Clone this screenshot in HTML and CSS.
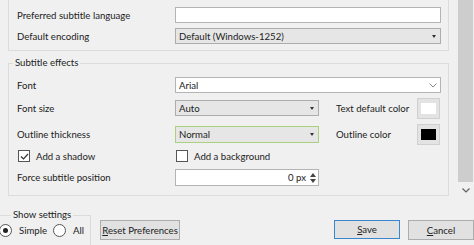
FILE: index.html
```html
<!DOCTYPE html>
<html lang="en">

<head>
    <meta charset="UTF-8">
    <meta name="viewport" content="width=device-width, initial-scale=1.0">
    <title>Subtitle Preferences</title>
    <link rel="stylesheet" href="styles.css">
</head>

<body>

    <div class="main">
        <div class="panes">

            <div class="group top-group">
                <div class="row r-lang">
                    <label class="lbl">Preferred subtitle language</label>
                    <div class="field wide"></div>
                </div>
                <div class="row r-enc">
                    <label class="lbl">Default encoding</label>
                    <div class="combo wide">
                        <span>Default (Windows-1252)</span>
                        <span class="tri"></span>
                    </div>
                </div>
            </div>

            <fieldset class="group effects">
                <legend>Subtitle effects</legend>

                <div class="row r-font">
                    <label class="lbl">Font</label>
                    <div class="field wide">
                        <span>Arial</span>
                        <svg class="chev" width="8" height="5" viewBox="0 0 8 5">
                            <polyline points="0.5,0.5 4,4 7.5,0.5" fill="none" stroke="#8a8a8a" stroke-width="1" />
                        </svg>
                    </div>
                </div>

                <div class="row r-size">
                    <label class="lbl">Font size</label>
                    <div class="combo narrow">
                        <span>Auto</span>
                        <span class="tri"></span>
                    </div>
                    <label class="lbl2">Text default color</label>
                    <div class="swatch-btn"><span class="swatch white"></span></div>
                </div>

                <div class="row r-outline">
                    <label class="lbl">Outline thickness</label>
                    <div class="combo narrow focused">
                        <span>Normal</span>
                        <span class="tri"></span>
                    </div>
                    <label class="lbl2">Outline color</label>
                    <div class="swatch-btn"><span class="swatch black"></span></div>
                </div>

                <div class="row r-checks">
                    <div class="check-item lbl">
                        <span class="box">
                            <svg width="11" height="11" viewBox="0 0 11 11">
                                <polyline points="2,5.5 4.5,8 9,3" fill="none" stroke="#333" stroke-width="1.2" />
                            </svg>
                        </span>
                        <span>Add a shadow</span>
                    </div>
                    <div class="check-item">
                        <span class="box"></span>
                        <span>Add a background</span>
                    </div>
                </div>

                <div class="row r-pos">
                    <label class="lbl">Force subtitle position</label>
                    <div class="field narrow spin">
                        <span>0 px</span>
                        <span class="spin-arrows">
                            <span class="up"></span>
                            <span class="down"></span>
                        </span>
                    </div>
                </div>
            </fieldset>

        </div>

        <div class="scrollbar">
            <div class="thumb"></div>
            <div class="scroll-down">
                <svg width="8" height="5" viewBox="0 0 8 5">
                    <polyline points="0.5,0.5 4,4 7.5,0.5" fill="none" stroke="#606060" stroke-width="1.2" />
                </svg>
            </div>
        </div>
    </div>

    <div class="footer">
        <fieldset class="show-settings">
            <legend>Show settings</legend>
            <div class="radios">
                <span class="radio selected"></span>
                <span class="radio-text">Simple</span>
                <span class="radio"></span>
                <span class="radio-text">All</span>
            </div>
        </fieldset>

        <button class="btn reset"><u>R</u>eset Preferences</button>
        <button class="btn save default"><u>S</u>ave</button>
        <button class="btn cancel"><u>C</u>ancel</button>
    </div>

</body>

</html>
```

FILE: styles.css
```css
html {
    font-family: Lato, sans-serif;
    font-size: 9.6px;
    color: #222222;
}

body {
    margin: 0;
    width: 474px;
    height: 245px;
    overflow: hidden;
    background-color: #f0f0f0;
}

label, span, legend, button {
    white-space: nowrap;
}

.main {
    display: flex;
    height: 196px;
}

.panes {
    padding-left: 8px;
    width: 441px;
}

.group {
    border: 1px solid #dcdcdc;
    margin: 0;
    padding: 0 7px 0 8px;
    min-width: 0;
}

.top-group {
    border-top: none;
    padding-top: 7px;
    padding-bottom: 6px;
    display: flex;
    flex-direction: column;
    gap: 5px;
}

.effects {
    margin-top: 5px;
    padding-top: 4px;
    padding-bottom: 3px;
}

.effects legend {
    margin-left: -4px;
    padding: 0 2px;
    line-height: 14px;
}

.row {
    display: flex;
    align-items: center;
}

.r-lang, .r-enc {
    height: 16px;
}

.r-font {
    height: 22px;
}

.r-size {
    height: 24px;
}

.r-outline {
    height: 29px;
}

.r-checks {
    height: 14px;
}

.r-pos {
    height: 29px;
}

.lbl {
    width: 158px;
    flex-shrink: 0;
}

.lbl2 {
    margin-left: 17px;
    width: 81px;
    flex-shrink: 0;
}

.field, .combo {
    box-sizing: border-box;
    height: 16px;
    display: flex;
    align-items: center;
    justify-content: space-between;
    padding: 0 4px 0 3px;
    border: 1px solid #b4b4b4;
    background: #ffffff;
    flex-shrink: 0;
}

.combo {
    background: #e6e6e6;
    border-color: #adadad;
}

.wide {
    width: 266px;
}

.narrow {
    width: 144px;
}

.focused {
    height: 17px;
    border-color: #a9d17f;
}

.tri {
    width: 0;
    height: 0;
    border-left: 2.5px solid transparent;
    border-right: 2.5px solid transparent;
    border-top: 3px solid #333;
}

.chev {
    margin-right: -1px;
}

.swatch-btn {
    box-sizing: border-box;
    width: 23px;
    height: 21px;
    border: 1px solid #d0d0d0;
    background: #e3e3e3;
    display: flex;
    align-items: center;
    justify-content: center;
    flex-shrink: 0;
}

.swatch {
    width: 15px;
    height: 11px;
}

.swatch.white {
    background: #ffffff;
}

.swatch.black {
    background: #000000;
}

.check-item {
    display: flex;
    align-items: center;
    gap: 6px;
    margin-left: 1px;
}

.check-item.lbl {
    width: 157px;
}

.box {
    box-sizing: border-box;
    width: 12px;
    height: 12px;
    border: 1px solid #555;
    background: #fff;
    display: flex;
}

.box svg {
    margin: -0.5px;
}

.spin {
    height: 17px;
    justify-content: flex-end;
    padding-right: 1px;
    gap: 3px;
}

.spin-arrows {
    display: flex;
    flex-direction: column;
    gap: 2px;
    padding: 0 1px;
}

.spin-arrows .up {
    width: 0;
    height: 0;
    border-left: 3px solid transparent;
    border-right: 3px solid transparent;
    border-bottom: 4px solid #444;
}

.spin-arrows .down {
    width: 0;
    height: 0;
    border-left: 3px solid transparent;
    border-right: 3px solid transparent;
    border-top: 4px solid #444;
}

.scrollbar {
    margin-left: 9px;
    width: 15px;
    display: flex;
    flex-direction: column;
}

.thumb {
    flex: 1;
    background: #cdcdcd;
    margin-bottom: 2px;
}

.scroll-down {
    height: 12px;
    display: flex;
    align-items: center;
    justify-content: center;
}

.footer {
    display: flex;
    align-items: flex-start;
}

.show-settings {
    margin: 12px 0 0 0;
    padding: 0;
    width: 88px;
    box-sizing: border-box;
    border: 1px solid #dcdcdc;
    border-left: none;
    border-bottom: none;
    height: 40px;
    flex-shrink: 0;
}

.show-settings legend {
    margin-left: 11px;
    padding: 0 2px;
    line-height: 14px;
}

.radios {
    display: flex;
    align-items: center;
    height: 16px;
    margin-left: -1px;
}

.radio {
    box-sizing: border-box;
    width: 13px;
    height: 13px;
    border: 1px solid #555;
    border-radius: 50%;
    background: #fff;
    display: flex;
    align-items: center;
    justify-content: center;
}

.radio.selected::after {
    content: "";
    width: 5px;
    height: 5px;
    border-radius: 50%;
    background: #222;
}

.radio-text {
    margin: 0 6px 0 7px;
}

.btn {
    font-family: Lato, sans-serif;
    font-size: 9.6px;
    color: #222222;
    margin-top: 24px;
    height: 20px;
    padding: 0;
    border: 1px solid #adadad;
    background: #e1e1e1;
    flex-shrink: 0;
}

.btn u {
    text-decoration-thickness: 1px;
}

.reset {
    margin-left: 9px;
    width: 80px;
}

.save {
    margin-left: auto;
    width: 66px;
    height: 19px;
}

.default {
    border-color: #3a86d0;
}

.cancel {
    margin-left: 8px;
    width: 66px;
}
```
